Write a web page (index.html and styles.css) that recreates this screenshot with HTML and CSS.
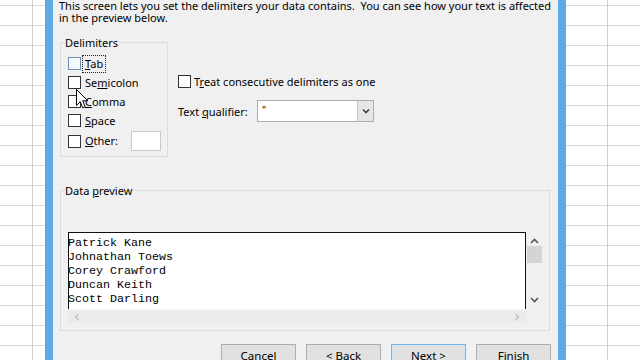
FILE: index.html
```html
<!DOCTYPE html>
<html>
<head>
<meta charset="utf-8">
<link rel="stylesheet" href="styles.css">
</head>
<body>
<div class="screen">
  <div class="sheet sheet-left"><div class="col col-left"></div></div>
  <div class="dialog">
    <div class="content">
      <p class="intro">This screen lets you set the delimiters your data contains.&nbsp; You can see how your text is affected<br>in the preview below.</p>
      <div class="options">
        <fieldset class="group delims">
          <legend>Delimiters</legend>
          <div class="check"><span class="box box-focus"></span><span class="lbl lbl-focus"><u>T</u>ab</span></div>
          <div class="check"><span class="box"></span><span class="lbl">Se<u>m</u>icolon</span></div>
          <div class="check"><span class="box"></span><span class="lbl"><u>C</u>omma</span></div>
          <div class="check"><span class="box"></span><span class="lbl"><u>S</u>pace</span></div>
          <div class="check check-other"><span class="box"></span><span class="lbl"><u>O</u>ther:</span><span class="other-input"></span></div>
        </fieldset>
        <div class="right-opts">
          <div class="check"><span class="box"></span><span class="lbl">T<u>r</u>eat consecutive delimiters as one</span></div>
          <div class="qual">
            <span class="qual-lbl">Text <u>q</u>ualifier:</span>
            <div class="select">
              <span class="select-val">"</span>
              <span class="select-btn"><svg width="8" height="6" viewBox="0 0 8 6"><polyline points="1,1.5 4,4.5 7,1.5" fill="none" stroke="#404040" stroke-width="1.6"/></svg></span>
            </div>
          </div>
        </div>
      </div>
      <fieldset class="group preview">
        <legend>Data <u>p</u>review</legend>
        <div class="pv">
          <div class="pv-main">
            <div class="pv-box">
              <div class="pv-text">Patrick Kane<br>Johnathan Toews<br>Corey Crawford<br>Duncan Keith<br>Scott Darling</div>
            </div>
            <div class="hscroll">
              <svg width="6" height="8" viewBox="0 0 6 8"><polyline points="4.5,1 1.5,4 4.5,7" fill="none" stroke="#c4c4c4" stroke-width="1.5"/></svg>
              <svg width="6" height="8" viewBox="0 0 6 8"><polyline points="1.5,1 4.5,4 1.5,7" fill="none" stroke="#c4c4c4" stroke-width="1.5"/></svg>
            </div>
          </div>
          <div class="vscroll">
            <svg class="arrow-up" width="9" height="6" viewBox="0 0 9 6"><polyline points="1,5 4.5,1.5 8,5" fill="none" stroke="#555" stroke-width="1.6"/></svg>
            <span class="thumb"></span>
            <span class="vspace"></span>
            <svg class="arrow-down" width="9" height="6" viewBox="0 0 9 6"><polyline points="1,1 4.5,4.5 8,1" fill="none" stroke="#555" stroke-width="1.6"/></svg>
          </div>
        </div>
      </fieldset>
      <div class="buttons">
        <span class="btn">Cancel</span>
        <span class="btn">&lt; <u>B</u>ack</span>
        <span class="btn btn-default"><u>N</u>ext &gt;</span>
        <span class="btn"><u>F</u>inish</span>
      </div>
    </div>
  </div>
  <div class="sheet sheet-right"><div class="col col-right"></div></div>
  <svg class="cursor" width="13" height="20" viewBox="0 0 13 20"><path d="M0.5,0.5 L0.5,16.5 L4.2,12.8 L6.8,18.8 L9.2,17.8 L6.7,11.8 L11.8,11.8 Z" fill="#fff" stroke="#000" stroke-width="1" stroke-linejoin="miter"/></svg>
</div>
</body>
</html>
```

FILE: styles.css
```css
* { box-sizing: border-box; }
html, body { margin: 0; padding: 0; }
body {
  width: 640px;
  height: 360px;
  overflow: hidden;
  background: #fff;
  font-family: "Noto Sans", "Open Sans", sans-serif;
  font-size: 11px;
  color: #000;
}
u { text-decoration: underline; text-underline-offset: 1px; }
.screen {
  position: relative;
  display: flex;
  width: 640px;
  height: 360px;
}
.sheet {
  height: 360px;
  background-color: #fff;
  background-image: linear-gradient(to bottom, #d8d8d8 1px, transparent 1px);
  background-size: 100% 20px;
  background-position: 0 5px;
}
.sheet-left { width: 45px; }
.sheet-right { width: 74px; }
.col { height: 100%; border-right: 1px solid #d0d0d0; }
.col-left { width: 33px; }
.col-right { width: 42px; }

.dialog {
  width: 521px;
  height: 360px;
  background: #f0f0f0;
  border-left: 8px solid #5fa9e4;
  border-right: 8px solid #5fa9e4;
}
.content {
  display: flex;
  flex-direction: column;
  padding-left: 6px;
}
.intro {
  margin: 0;
  height: 25px;
  line-height: 12.4px;
  white-space: nowrap;
}
.options {
  display: flex;
  margin-top: 11px;
  align-items: flex-start;
}
.group {
  margin: 0;
  border: 1px solid #dcdcdc;
}
.group legend {
  padding: 0 1px;
  margin-left: -4px;
  line-height: 13px;
}
.delims {
  width: 108px;
  margin-left: 1px;
  padding: 5px 6px 4px 7px;
  display: flex;
  flex-direction: column;
}
.check {
  display: flex;
  align-items: center;
  height: 19px;
}
.check-other { height: 22px; }
.box {
  width: 13px;
  height: 13px;
  background: #fff;
  border: 1px solid #333;
  flex: none;
}
.box-focus { border-color: #6f8fb5; background: #f4f8fc; }
.lbl {
  margin-left: 1px;
  padding: 0 2px;
  border: 1px dotted transparent;
  line-height: 16px;
  white-space: nowrap;
}
.lbl-focus { border-color: #222; }
.other-input {
  margin-left: auto;
  width: 30px;
  height: 20px;
  background: #fff;
  border: 1px solid #c8c8c8;
}
.right-opts {
  margin-left: 10px;
  padding-top: 36px;
  display: flex;
  flex-direction: column;
}
.right-opts .check .lbl { margin-left: 0; }
.qual {
  display: flex;
  align-items: center;
  margin-top: 9px;
  height: 22px;
}
.qual-lbl { width: 79px; white-space: nowrap; }
.select {
  display: flex;
  width: 117px;
  height: 22px;
  background: #fff;
  border: 1px solid #adadad;
}
.select-val {
  flex: 1;
  padding-left: 4px;
  line-height: 18px;
  font-size: 10px;
}
.select-btn {
  width: 16px;
  background: #e6e6e6;
  border-left: 1px solid #c4c4c4;
  display: flex;
  align-items: center;
  justify-content: center;
}
.preview {
  width: 490px;
  height: 147px;
  margin-left: 1px;
  margin-top: 27px;
  padding: 35px 0 0 7px;
}
.pv { display: flex; }
.pv-main { width: 458px; display: flex; flex-direction: column; }
.pv-box {
  height: 77px;
  background: #fff;
  border-top: 1px solid #111;
  border-left: 1px solid #111;
  border-right: 1px solid #111;
  overflow: hidden;
}
.pv-text {
  margin-left: -1px;
  padding-top: 3px;
  font-family: "Liberation Mono", "Courier New", monospace;
  font-size: 11.67px;
  line-height: 14px;
  white-space: nowrap;
}
.hscroll {
  height: 14px;
  background: #ebebeb;
  border-top: 1px solid #f6f6f6;
  display: flex;
  align-items: center;
  justify-content: space-between;
  padding: 0 6px 0 6px;
}
.vscroll {
  width: 17px;
  height: 77px;
  display: flex;
  flex-direction: column;
  align-items: center;
  padding-top: 6px;
}
.thumb {
  margin-top: 2px;
  width: 15px;
  height: 17px;
  background: #d4d4d4;
}
.vspace { flex: 1; }
.arrow-down { margin-bottom: 6px; }
.buttons {
  display: flex;
  justify-content: flex-end;
  gap: 10px;
  margin-top: 13px;
  margin-right: 7px;
}
.btn {
  width: 75px;
  height: 23px;
  background: #e1e1e1;
  border: 1px solid #adadad;
  text-align: center;
  line-height: 21px;
  font-size: 11.5px;
}
.btn-default { border-color: #7fb2e2; box-shadow: inset 0 0 0 1px #cfe3f6; }
.cursor {
  position: absolute;
  left: 76px;
  top: 89px;
}
```
